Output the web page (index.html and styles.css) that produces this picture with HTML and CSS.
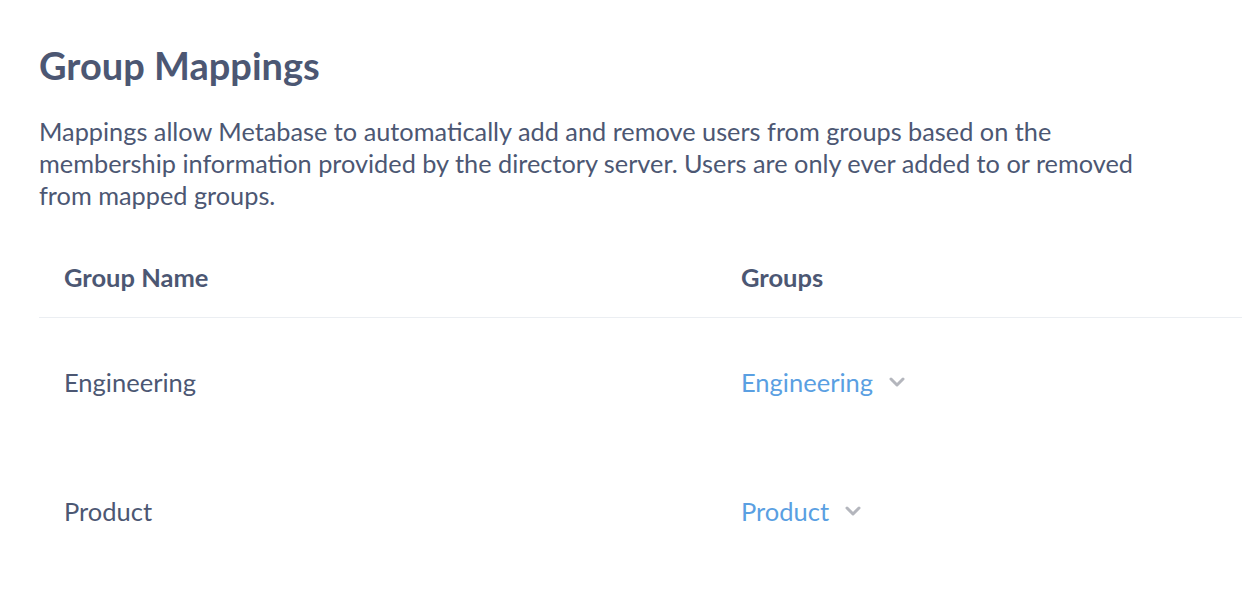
FILE: index.html
```html
<!DOCTYPE html>
<html lang="en">
<head>
    <meta charset="UTF-8">
    <meta name="viewport" content="width=device-width, initial-scale=1.0">
    <title>Group Mappings</title>
    <link rel="stylesheet" href="styles.css">
</head>
<body>
    <div class="mappings">
        <h2 class="mappings-title">Group Mappings</h2>
        <p class="mappings-desc">Mappings allow Metabase to automatically add and remove users from groups based on the membership information provided by the directory server. Users are only ever added to or removed from mapped groups.</p>

        <table class="mappings-table">
            <thead>
                <tr>
                    <th class="col-name">Group Name</th>
                    <th>Groups</th>
                </tr>
            </thead>
            <tbody>
                <tr>
                    <td class="col-name">Engineering</td>
                    <td>
                        <span class="group-select">Engineering
                            <svg class="chevron" viewBox="0 0 16 10" width="16" height="10"><path d="M2 2 L8 8 L14 2" fill="none" stroke="currentColor" stroke-width="3" stroke-linecap="round" stroke-linejoin="round"/></svg>
                        </span>
                    </td>
                </tr>
                <tr>
                    <td class="col-name">Product</td>
                    <td>
                        <span class="group-select">Product
                            <svg class="chevron" viewBox="0 0 16 10" width="16" height="10"><path d="M2 2 L8 8 L14 2" fill="none" stroke="currentColor" stroke-width="3" stroke-linecap="round" stroke-linejoin="round"/></svg>
                        </span>
                    </td>
                </tr>
            </tbody>
        </table>
    </div>
</body>
</html>
```

FILE: styles.css
```css
/* Page */
body {
    margin: 0;
    padding: 0;
    background-color: #fff;
    font-family: Lato, "Noto Sans", sans-serif;
    color: #4c5773;
}

.mappings {
    padding: 40px 0 0 39px;
}

.mappings-title {
    font-size: 38px;
    font-weight: 700;
    line-height: 50px;
    margin: 0 0 25px;
}

.mappings-desc {
    font-size: 25.3px;
    line-height: 32px;
    max-width: 1110px;
    margin: 0 0 28px;
}

/* Table */
.mappings-table {
    width: 100%;
    border-collapse: collapse;
    font-size: 25.5px;
}

.mappings-table th {
    text-align: left;
    font-weight: 700;
    padding: 0 25px 2px;
    height: 76px;
    vertical-align: middle;
    border-bottom: 1px solid #ebeef2;
}

.mappings-table td {
    padding: 0 25px 2px;
    height: 127px;
    vertical-align: middle;
}

.mappings-table .col-name {
    width: 627px;
}

.group-select {
    color: #5a9fe2;
    display: inline-flex;
    align-items: center;
    gap: 16px;
    cursor: pointer;
}

.chevron {
    color: #b4b6bd;
}
```
